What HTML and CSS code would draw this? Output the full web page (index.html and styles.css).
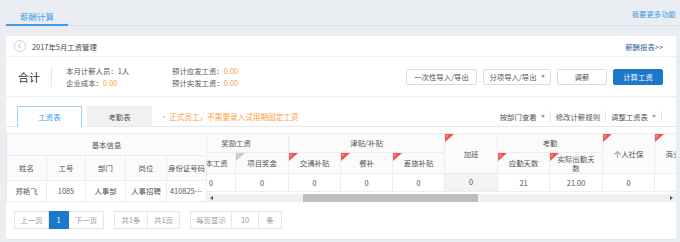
FILE: index.html
```html
<!DOCTYPE html>
<html lang="zh-CN">
<head>
  <meta charset="UTF-8">
  <meta name="viewport" content="width=device-width, initial-scale=1.0">
  <title>薪酬计算</title>
  <link rel="stylesheet" href="styles.css">
</head>
<body>

  <div class="topbar">
    <a class="topbar-tab" href="javascript:void(0);">薪酬计算</a>
    <a class="topbar-more" href="javascript:void(0);">我要更多功能</a>
  </div>

  <div class="card">
    <div class="card-head">
      <span class="back-btn">
        <svg width="12" height="12" viewBox="0 0 12 12">
          <circle cx="6" cy="6" r="5.5" fill="none" stroke="#c4c8cd" stroke-width="0.8"/>
          <path d="M7 3.3 L4.4 6 L7 8.7" fill="none" stroke="#9aa0a6" stroke-width="0.8"/>
        </svg>
      </span>
      <span class="card-title">2017年5月工资管理</span>
      <a class="card-link" href="javascript:void(0);">薪酬报表&gt;&gt;</a>
    </div>

    <div class="summary">
      <div class="summary-total">合计</div>
      <div class="summary-stats">
        <div class="stat-col">
          <p>本月计薪人员：1人</p>
          <p>企业成本：<em>0.00</em></p>
        </div>
        <div class="stat-col">
          <p>预计应发工资：<em>0.00</em></p>
          <p>预计实发工资：<em>0.00</em></p>
        </div>
      </div>
      <div class="summary-actions">
        <button class="btn btn-import">一次性导入/导出</button>
        <button class="btn btn-split">分项导入/导出<i class="caret"></i></button>
        <button class="btn btn-adjust">调薪</button>
        <button class="btn btn-primary">计算工资</button>
      </div>
    </div>

    <div class="sheet">
      <div class="sheet-tabs">
        <a class="sheet-tab active" href="javascript:void(0);">工资表</a>
        <a class="sheet-tab" href="javascript:void(0);">考勤表</a>
        <span class="sheet-tip">• 正式员工，不需要录入试用期固定工资</span>
        <div class="sheet-tools">
          <a href="javascript:void(0);">按部门查看<i class="caret"></i></a>
          <a href="javascript:void(0);">修改计薪规则</a>
          <a href="javascript:void(0);">调整工资表<i class="caret"></i></a>
        </div>
      </div>

      <div class="grid">
        <table class="grid-fixed">
          <colgroup>
            <col style="width:40px"><col style="width:39px"><col style="width:40px"><col style="width:41px"><col style="width:40px">
          </colgroup>
          <tr class="row-group">
            <th colspan="5">基本信息</th>
          </tr>
          <tr class="row-head">
            <th>姓名</th><th>工号</th><th>部门</th><th>岗位</th><th>身份证号码</th>
          </tr>
          <tr class="row-data">
            <td>郑艳飞</td><td>1085</td><td>人事部</td><td>人事招聘</td><td class="cell-id">410825198806123516</td>
          </tr>
        </table>

        <div class="grid-scroll">
          <div class="grid-viewport">
            <table class="grid-main">
              <colgroup>
                <col style="width:52px"><col style="width:53px"><col style="width:52px"><col style="width:52px"><col style="width:52px"><col style="width:53px"><col style="width:52px"><col style="width:53px"><col style="width:52px"><col style="width:52px"><col style="width:52px">
              </colgroup>
              <tr class="row-group">
                <th colspan="2">奖励工资</th>
                <th colspan="3">津贴/补贴</th>
                <th rowspan="2" class="flag">加班</th>
                <th colspan="2">考勤</th>
                <th rowspan="2" class="flag">个人社保</th>
                <th rowspan="2" class="flag">商业保险</th>
                <th rowspan="2">公积金</th>
              </tr>
              <tr class="row-head">
                <th class="cell-cut">基本工资</th>
                <th class="flag flag-gray">项目奖金</th>
                <th class="flag">交通补贴</th>
                <th class="flag">餐补</th>
                <th class="flag">差旅补贴</th>
                <th class="flag">应勤天数</th>
                <th class="flag cell-wrap">实际出勤天数</th>
              </tr>
              <tr class="row-data">
                <td class="cell-cut">0</td><td>0</td><td>0</td><td>0</td><td>0</td>
                <td class="cell-lock">0</td><td>21</td><td>21.00</td><td>0</td><td>0</td><td>0</td>
              </tr>
            </table>
          </div>
          <div class="scrollbar">
            <i class="scroll-arrow scroll-left"></i>
            <span class="scroll-thumb"></span>
            <i class="scroll-arrow scroll-right"></i>
          </div>
        </div>
      </div>

      <div class="pager">
        <div class="pager-group">
          <a href="javascript:void(0);" class="pg-prev">上一页</a>
          <a href="javascript:void(0);" class="pg-num current">1</a>
          <a href="javascript:void(0);" class="pg-next">下一页</a>
        </div>
        <div class="pager-group">
          <span class="pg-total">共1条</span>
          <span class="pg-pages">共1页</span>
        </div>
        <div class="pager-group">
          <span class="pg-label">每页显示</span>
          <span class="pg-size">10</span>
          <span class="pg-unit">条</span>
        </div>
      </div>
    </div>
  </div>

</body>
</html>
```

FILE: styles.css
```css
* {
  box-sizing: border-box;
}
html, body {
  margin: 0;
  padding: 0;
}
body {
  width: 680px;
  height: 242px;
  overflow: hidden;
  background: #eaedf1;
  font-family: "Noto Sans CJK SC", "Noto Sans", sans-serif;
  font-size: 7.4px;
  color: #555;
}
p {
  margin: 0;
}
a {
  text-decoration: none;
  color: inherit;
}
em {
  font-style: normal;
  color: #ff9a3c;
}

/* top nav */
.topbar {
  height: 26px;
  display: flex;
  justify-content: space-between;
  border-bottom: 1px solid #dde1e7;
}
.topbar-tab {
  width: 62px;
  margin-left: 6px;
  padding-top: 11px;
  line-height: 10px;
  text-align: center;
  font-size: 8.5px;
  color: #46a0e8;
  border-bottom: 2px solid #3f9ae6;
  margin-bottom: -1px;
}
.topbar-more {
  margin-right: 4px;
  padding-top: 9px;
  line-height: 10px;
  color: #3f9ae6;
}

/* card */
.card {
  margin: 10px 4px 0 6px;
  height: 204px;
  background: #fff;
  border-radius: 2px;
  border-bottom: 1px solid #e2e5e9;
}
.card-head {
  height: 21px;
  display: flex;
  align-items: center;
  padding: 0 13px 0 8px;
  border-bottom: 1px solid #eef0f2;
}
.back-btn {
  width: 12px;
  height: 12px;
  display: flex;
}
.card-title {
  margin-left: 6px;
  color: #444;
}
.card-link {
  margin-left: auto;
  color: #34669c;
}

/* summary */
.summary {
  height: 40px;
  display: flex;
  align-items: center;
  padding-right: 13px;
  border-bottom: 1px solid #eceef1;
}
.summary-total {
  flex: none;
  width: 46px;
  padding-left: 12px;
  font-size: 11px;
  line-height: 20px;
  white-space: nowrap;
  color: #333;
  border-right: 1px solid #e4e6e9;
}
.summary-stats {
  display: flex;
  padding-left: 14px;
}
.stat-col {
  width: 106px;
  line-height: 12px;
}
.summary-actions {
  margin-left: auto;
  display: flex;
  gap: 6px;
}
.btn {
  height: 16px;
  padding: 0;
  border: 1px solid #d9dcdf;
  border-radius: 2px;
  background: #fff;
  font-family: inherit;
  font-size: 7.4px;
  color: #555;
  display: flex;
  align-items: center;
  justify-content: center;
}
.btn-import {
  width: 71px;
}
.btn-split {
  width: 68px;
}
.btn-adjust {
  width: 50px;
}
.btn-primary {
  width: 50px;
  background: #1b78cc;
  border-color: #1b78cc;
  color: #fff;
}
.caret {
  display: inline-block;
  margin-left: 4px;
  border-top: 3px solid #999;
  border-left: 2.5px solid transparent;
  border-right: 2.5px solid transparent;
}

/* sheet tabs */
.sheet {
  padding-top: 9px;
}
.sheet-tabs {
  height: 21px;
  display: flex;
  align-items: flex-end;
  padding: 0 14px 0 11px;
  border-bottom: 1px solid #e4e7eb;
}
.sheet-tab {
  width: 65px;
  height: 20px;
  line-height: 19px;
  margin-right: 5px;
  text-align: center;
  background: #f1f1f2;
  color: #555;
  border: 1px solid #f1f1f2;
  border-bottom: none;
}
.sheet-tab.active {
  height: 21px;
  margin-bottom: -1px;
  background: #fff;
  color: #3f9ae6;
  border-color: #a8d0f2;
}
.sheet-tip {
  align-self: center;
  margin-left: 3px;
  color: #ff9a3c;
  font-size: 7.6px;
}
.sheet-tools {
  margin-left: auto;
  align-self: center;
  display: flex;
}
.sheet-tools a {
  display: flex;
  align-items: center;
  padding: 0 5px;
  line-height: 11px;
  border-right: 1px solid #e6e6e6;
  color: #555;
}

/* grid */
.grid {
  display: flex;
  margin-top: 6px;
}
.grid table {
  border-collapse: collapse;
  table-layout: fixed;
}
.grid th,
.grid td {
  border: 1px solid #ebedf0;
  padding: 0;
  text-align: center;
  font-weight: normal;
  white-space: nowrap;
  overflow: hidden;
  line-height: 10px;
  color: #555;
}
.grid th {
  background: #fbfbfc;
  position: relative;
}
.row-group {
  height: 19px;
}
.row-head {
  height: 21px;
}
.row-data {
  height: 18px;
}
.row-data td {
  background: #fff;
}
.grid-fixed {
  width: 200px;
  flex: none;
}
.grid-fixed th:first-child,
.grid-fixed td:first-child {
  border-left-color: #e6e8eb;
}
.cell-id {
  text-align: left !important;
  padding-left: 3px !important;
  text-overflow: ellipsis;
}
.grid-scroll {
  flex: 1;
  min-width: 0;
}
.grid-viewport {
  overflow: hidden;
}
.grid-main {
  width: 575px;
  margin-left: -24px;
}
.grid-main .cell-cut {
  text-align: left;
}
.grid-main th.cell-cut {
  padding-left: 14px;
}
.grid-main td.cell-cut {
  padding-left: 25px;
}
.grid-main .cell-wrap {
  white-space: normal;
  line-height: 9px;
  padding: 0 6px;
}
.grid-main .cell-lock {
  background: #f2f3f5;
  vertical-align: top;
  padding-top: 3px;
}
.flag::before {
  content: "?";
  position: absolute;
  left: 0;
  top: 0;
  width: 8px;
  height: 8px;
  background: #f0544b;
  clip-path: polygon(0 0, 100% 0, 0 100%);
  color: #fff;
  font-size: 4px;
  line-height: 4px;
  text-align: left;
  padding-left: 1px;
}
.flag-gray::before {
  background: #c8c9cb;
}

/* scrollbar */
.scrollbar {
  position: relative;
  height: 8px;
  margin-top: 2px;
  background: #f0f0f0;
}
.scroll-thumb {
  position: absolute;
  left: 96px;
  top: 0;
  width: 175px;
  height: 8px;
  background: #bdbdbd;
}
.scroll-arrow {
  position: absolute;
  top: 2px;
  border-top: 2px solid transparent;
  border-bottom: 2px solid transparent;
}
.scroll-left {
  left: 3px;
  border-right: 3px solid #555;
}
.scroll-right {
  right: 3px;
  border-left: 3px solid #555;
}

/* pager */
.pager {
  display: flex;
  gap: 10px;
  padding: 9px 0 0 8px;
}
.pager-group {
  display: flex;
}
.pager-group a,
.pager-group span {
  height: 18px;
  line-height: 16px;
  text-align: center;
  border: 1px solid #e3e5e8;
  color: #999;
}
.pager-group > * + * {
  border-left: none !important;
}
.pg-prev, .pg-next {
  width: 35px;
}
.pg-num {
  width: 20px;
}
.pg-num.current {
  background: #1b78cc;
  border-color: #1b78cc !important;
  color: #fff !important;
}
.pg-total {
  width: 34px;
}
.pg-pages {
  width: 32px;
}
.pg-label {
  width: 42px;
}
.pg-size {
  width: 27px;
}
.pg-unit {
  width: 23px;
}
```
